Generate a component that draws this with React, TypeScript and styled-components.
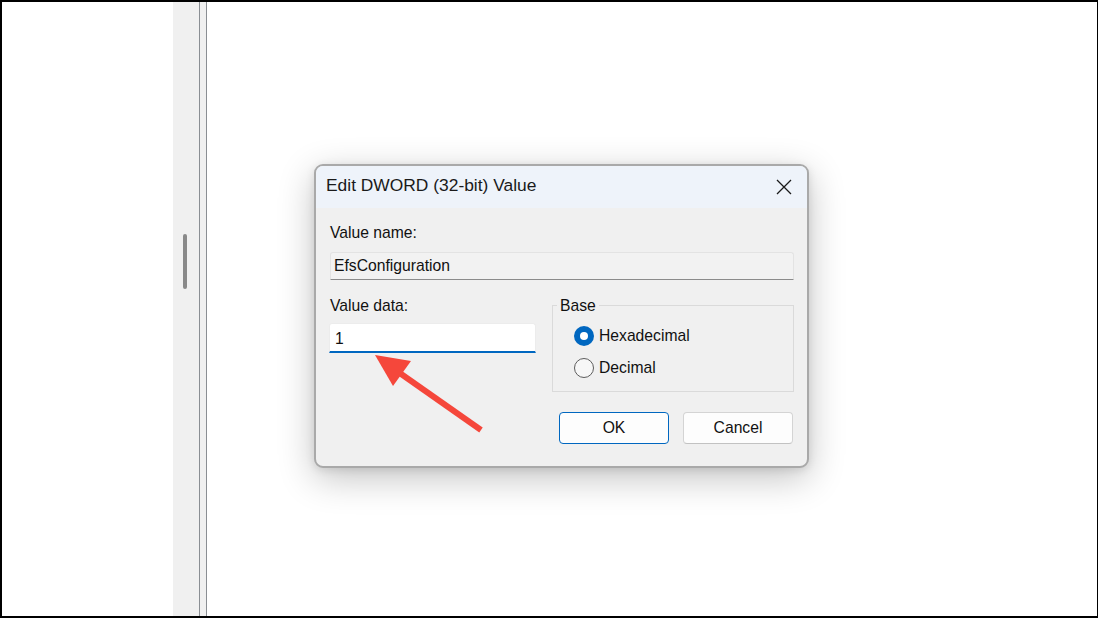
import styled, { createGlobalStyle } from "styled-components";

const GlobalStyle = createGlobalStyle`
  html, body {
    margin: 0;
    padding: 0;
    background: #ffffff;
  }
  * {
    box-sizing: border-box;
  }
`;

const Frame = styled.div`
  width: 1098px;
  height: 618px;
  display: flex;
  border-style: solid;
  border-color: #000000;
  border-width: 2px 1px 2px 2px;
  background: #ffffff;
  font-family: "Liberation Sans", Arial, sans-serif;
  overflow: hidden;
`;

const TreePane = styled.div`
  width: 171px;
  flex-shrink: 0;
  background: #ffffff;
`;

const ScrollStrip = styled.div`
  width: 26px;
  flex-shrink: 0;
  background: #f0f0f0;
  padding: 232px 0 0 10px;
`;

const ScrollThumb = styled.div`
  width: 4px;
  height: 55px;
  border-radius: 3px;
  background: #898989;
`;

const Splitter = styled.div`
  width: 8px;
  flex-shrink: 0;
  background: #f0f0f0;
  border-left: 1px solid #8a8e93;
  border-right: 1px solid #8a8e93;
`;

const MainPane = styled.div`
  flex: 1;
  position: relative;
  background: #ffffff;
`;

const Dialog = styled.div`
  position: absolute;
  left: 107px;
  top: 162px;
  width: 495px;
  display: flex;
  flex-direction: column;
  border: 2px solid #a9a9a9;
  border-radius: 9px;
  background: #f0f0f0;
  overflow: hidden;
  box-shadow: 0 10px 36px rgba(0, 0, 0, 0.24), 0 2px 8px rgba(0, 0, 0, 0.1);
`;

const TitleBar = styled.div`
  height: 42px;
  display: flex;
  align-items: center;
  justify-content: space-between;
  padding: 0 15px 3px 10px;
  background: #eef3fa;
`;

const Title = styled.span`
  font-size: 17.4px;
  color: #1a1a1a;
`;

const CloseButton = styled.button`
  border: none;
  background: transparent;
  padding: 0;
  width: 16px;
  height: 16px;
  display: flex;
  align-items: center;
  justify-content: center;
  margin-top: 2px;
  cursor: pointer;
`;

const Body = styled.div`
  display: flex;
  flex-direction: column;
  padding: 15px 13px 22px 14px;
`;

const Label = styled.div`
  font-size: 15.7px;
  line-height: 20px;
  color: #111111;
`;

const NameField = styled.div`
  margin-top: 9px;
  height: 28px;
  display: flex;
  align-items: center;
  padding: 0 0 0 3px;
  font-size: 15.7px;
  color: #111111;
  background: #f2f2f2;
  border: 1px solid #e3e3e3;
  border-bottom-color: #8b8b8b;
  border-radius: 3px 3px 0 0;
`;

const Columns = styled.div`
  margin-top: 15.5px;
  display: grid;
  grid-template-columns: 206px 242px;
  column-gap: 16px;
  align-items: start;
`;

const Column = styled.div`
  display: flex;
  flex-direction: column;
`;

const DataInput = styled.div`
  margin-top: 7.5px;
  margin-left: -1px;
  height: 30px;
  display: flex;
  align-items: center;
  padding: 2px 0 0 5px;
  font-size: 15.7px;
  color: #111111;
  background: #ffffff;
  border: 1px solid #ececec;
  border-bottom: 2px solid #0067c0;
  border-radius: 3px 3px 0 0;
`;

const GroupBox = styled.fieldset`
  margin: 0;
  height: 96.5px;
  padding: 9px 10px 0 21px;
  border: 1px solid #dadada;
  display: flex;
  flex-direction: column;
  gap: 10.5px;
`;

const Legend = styled.legend`
  padding: 0 3px;
  margin-left: -17px;
  font-size: 15.7px;
  line-height: 20px;
  color: #111111;
`;

const RadioRow = styled.label`
  height: 22px;
  display: flex;
  align-items: center;
  gap: 5px;
  font-size: 15.7px;
  color: #111111;
`;

const RadioDot = styled.span<{ $checked?: boolean }>`
  width: 20px;
  height: 20px;
  border-radius: 50%;
  display: flex;
  align-items: center;
  justify-content: center;
  background: ${(p) => (p.$checked ? "#0067c0" : "#f7f7f7")};
  border: ${(p) => (p.$checked ? "none" : "1px solid #5c5c5c")};
  &::after {
    content: "";
    display: ${(p) => (p.$checked ? "block" : "none")};
    width: 8px;
    height: 8px;
    border-radius: 50%;
    background: #ffffff;
  }
`;

const ButtonRow = styled.div`
  margin-top: 20px;
  display: flex;
  justify-content: flex-end;
  gap: 14px;
  padding-right: 1px;
`;

const DialogButton = styled.button<{ $primary?: boolean }>`
  width: 110px;
  height: 32px;
  font-family: "Liberation Sans", Arial, sans-serif;
  font-size: 15.7px;
  color: #111111;
  background: #fdfdfd;
  border-radius: 4px;
  border: 1px solid ${(p) => (p.$primary ? "#0067c0" : "#d4d4d4")};
  border-bottom-color: ${(p) => (p.$primary ? "#0067c0" : "#c2c2c2")};
  cursor: pointer;
`;

const Callout = styled.svg`
  position: absolute;
  left: 0;
  top: 0;
  pointer-events: none;
`;

export default function App() {
  return (
    <>
      <GlobalStyle />
      <Frame>
        <TreePane />
        <ScrollStrip>
          <ScrollThumb />
        </ScrollStrip>
        <Splitter />
        <MainPane>
          <Dialog>
            <TitleBar>
              <Title>Edit DWORD (32-bit) Value</Title>
              <CloseButton aria-label="Close">
                <svg width="16" height="16" viewBox="0 0 16 16">
                  <path d="M1 1 L15 15 M15 1 L1 15" stroke="#1a1a1a" strokeWidth="1.3" fill="none" />
                </svg>
              </CloseButton>
            </TitleBar>
            <Body>
              <Label>Value name:</Label>
              <NameField>EfsConfiguration</NameField>
              <Columns>
                <Column>
                  <Label>Value data:</Label>
                  <DataInput>1</DataInput>
                </Column>
                <GroupBox>
                  <Legend>Base</Legend>
                  <RadioRow>
                    <RadioDot $checked />
                    Hexadecimal
                  </RadioRow>
                  <RadioRow>
                    <RadioDot />
                    Decimal
                  </RadioRow>
                </GroupBox>
              </Columns>
              <ButtonRow>
                <DialogButton $primary>OK</DialogButton>
                <DialogButton>Cancel</DialogButton>
              </ButtonRow>
            </Body>
          </Dialog>
          <Callout width="890" height="614" viewBox="207 2 890 614">
            <line x1="481" y1="430" x2="394" y2="369" stroke="#f5473b" strokeWidth="6" />
            <polygon points="375,355 411,361 393,386" fill="#f5473b" />
          </Callout>
        </MainPane>
      </Frame>
    </>
  );
}
